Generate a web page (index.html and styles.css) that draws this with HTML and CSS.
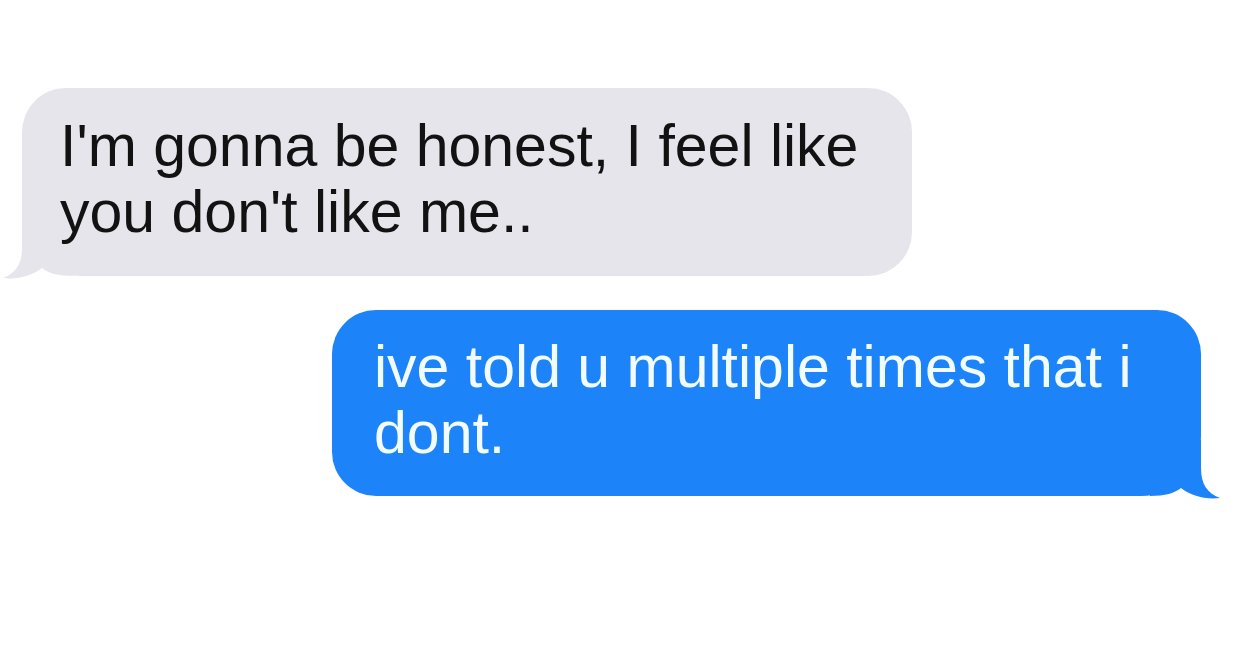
FILE: index.html
```html
<!DOCTYPE html>
<html>
<head>
<meta charset="utf-8">
<link rel="stylesheet" href="styles.css">
</head>
<body>
<main class="thread">
  <div class="bubble received">
    <svg class="tail tail-left" viewBox="0 0 75 65" width="75" height="65"><path d="M0 0 L51 0 L51 28 C51 44 57 53 70 58 C55 60 40 55 31 48 C25 53 15 56 0 56 Z"/></svg>
    <p class="text">I'm gonna be honest, I feel like you don't like me..</p>
  </div>
  <div class="bubble sent">
    <svg class="tail tail-right" viewBox="0 0 75 65" width="75" height="65"><path d="M0 0 L51 0 L51 28 C51 44 57 53 70 58 C55 60 40 55 31 48 C25 53 15 56 0 56 Z"/></svg>
    <p class="text">ive told u multiple times that i dont.</p>
  </div>
</main>
</body>
</html>
```

FILE: styles.css
```css
html, body {
  margin: 0;
  padding: 0;
  background: #ffffff;
}
.thread {
  width: 1244px;
  height: 651px;
  display: flex;
  flex-direction: column;
  padding-top: 88px;
  box-sizing: border-box;
  font-family: "Liberation Sans", Arial, sans-serif;
}
.bubble {
  position: relative;
  box-sizing: border-box;
  height: 188px;
  border-radius: 44px;
}
.text {
  position: relative;
  margin: 0;
  font-size: 59px;
  line-height: 66px;
}
.received {
  margin-left: 22px;
  width: 890px;
  background: #e6e5eb;
  padding: 25px 20px 0 38px;
  color: #121212;
  border-bottom-left-radius: 60px;
}
.sent {
  margin-top: 34px;
  margin-left: 332px;
  width: 869px;
  height: 186px;
  background: #1c84f8;
  padding: 24px 30px 0 42px;
  color: #f2fbff;
  border-bottom-right-radius: 60px;
}
.tail {
  position: absolute;
  bottom: -9px;
}
.tail-right {
  right: -24px;
  fill: #1c84f8;
}
.tail-left {
  left: -24px;
  fill: #e6e5eb;
  transform: scaleX(-1);
}
```
